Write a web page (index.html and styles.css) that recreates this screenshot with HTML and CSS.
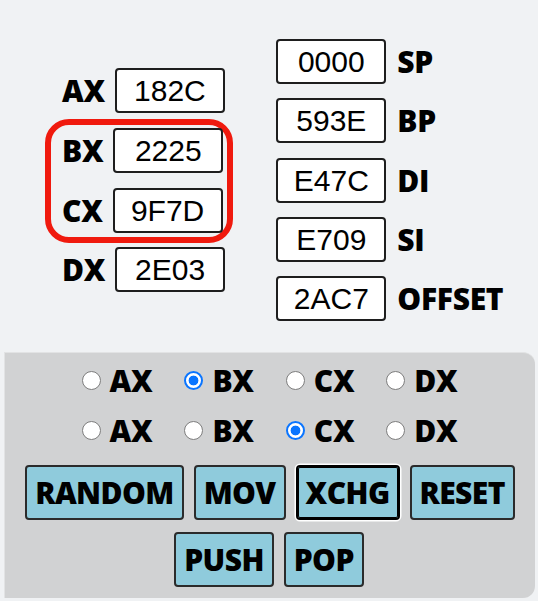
FILE: index.html
```html
<!DOCTYPE html>
<html lang="en">
<head>
<meta charset="utf-8">
<title>Registers</title>
<link rel="stylesheet" href="styles.css">
</head>
<body>
<div class="regs">
  <div class="col-left">
    <div class="row row-out"><span class="lbl">AX</span><div class="val">182C</div></div>
    <div class="hl">
      <div class="row"><span class="lbl">BX</span><div class="val">2225</div></div>
      <div class="row"><span class="lbl">CX</span><div class="val">9F7D</div></div>
    </div>
    <div class="row row-out row-dx"><span class="lbl">DX</span><div class="val">2E03</div></div>
  </div>
  <div class="col-right">
    <div class="row"><div class="val">0000</div><span class="lbl">SP</span></div>
    <div class="row"><div class="val">593E</div><span class="lbl">BP</span></div>
    <div class="row"><div class="val">E47C</div><span class="lbl">DI</span></div>
    <div class="row"><div class="val">E709</div><span class="lbl">SI</span></div>
    <div class="row"><div class="val">2AC7</div><span class="lbl">OFFSET</span></div>
  </div>
</div>
<div class="panel">
  <div class="radios">
    <label class="opt"><input type="radio" name="src"><span>AX</span></label>
    <label class="opt"><input type="radio" name="src" checked><span>BX</span></label>
    <label class="opt"><input type="radio" name="src"><span>CX</span></label>
    <label class="opt"><input type="radio" name="src"><span>DX</span></label>
  </div>
  <div class="radios radios-2">
    <label class="opt"><input type="radio" name="dst"><span>AX</span></label>
    <label class="opt"><input type="radio" name="dst"><span>BX</span></label>
    <label class="opt"><input type="radio" name="dst" checked><span>CX</span></label>
    <label class="opt"><input type="radio" name="dst"><span>DX</span></label>
  </div>
  <div class="btns">
    <button class="btn">RANDOM</button>
    <button class="btn">MOV</button>
    <button class="btn btn-focus">XCHG</button>
    <button class="btn">RESET</button>
  </div>
  <div class="btns btns-2">
    <button class="btn">PUSH</button>
    <button class="btn">POP</button>
  </div>
</div>
</body>
</html>
```

FILE: styles.css
```css
* { box-sizing: border-box; }

html, body {
  margin: 0;
  padding: 0;
}

body {
  width: 538px;
  height: 601px;
  background: #f0f2f4;
  font-family: "Open Sans", "Liberation Sans", sans-serif;
  color: #000;
  overflow: hidden;
}

.regs {
  display: flex;
  align-items: center;
  gap: 43px;
  padding: 39px 0 31px 45px;
}

.row {
  display: flex;
  align-items: center;
  gap: 10px;
  height: 45px;
}

.lbl {
  font-family: "Open Sans", sans-serif;
  font-weight: 800;
  font-size: 30px;
  line-height: 41px;
  letter-spacing: -0.3px;
}

.val {
  width: 110px;
  height: 45px;
  border: 2px solid #1e1e1e;
  border-radius: 4px;
  background: #fff;
  font-family: "Liberation Sans", Arial, sans-serif;
  font-size: 30px;
  line-height: 41px;
  text-align: center;
}

.col-left {
  display: flex;
  flex-direction: column;
}

.row-out {
  padding-left: 17px;
}

.hl {
  display: flex;
  flex-direction: column;
  gap: 15px;
  margin: 6px 0 4px;
  padding: 3px 4px 4px 11px;
  border: 6px solid #f01a0e;
  border-radius: 24px;
}

.col-right {
  display: flex;
  flex-direction: column;
  gap: 14.25px;
}

.col-right .row {
  gap: 11px;
}

.panel {
  margin-left: 4px;
  width: 531px;
  height: 246px;
  background: #d1d2d3;
  border-top: 1px solid #e2e3e4;
  border-left: 1px solid #e2e3e4;
  border-radius: 0 12px 12px 0;
  padding: 7px 0 0;
}

.radios {
  display: flex;
  justify-content: center;
  gap: 32px;
  height: 41px;
  padding-right: 1px;
}

.radios-2 {
  margin-top: 9px;
}

.opt {
  display: flex;
  align-items: center;
  gap: 9px;
  font-weight: 800;
  font-size: 30px;
  line-height: 41px;
  letter-spacing: -0.3px;
}

.opt input {
  appearance: none;
  -webkit-appearance: none;
  margin: 0;
  width: 19px;
  height: 19px;
  border-radius: 50%;
  border: 1.5px solid #7d7d7d;
  background: #fff;
}

.opt input:checked {
  border: 2px solid #0a75ff;
  background: radial-gradient(circle, #0a75ff 0 4.6px, #fff 5.2px);
}

.btns {
  display: flex;
  justify-content: center;
  gap: 10px;
  margin-top: 14px;
}

.btns-2 {
  margin-top: 12px;
  padding-right: 2px;
}

.btn {
  height: 55px;
  padding: 0 8px;
  border: 2px solid #2b2b2b;
  border-radius: 4px;
  background: #8fcbdc;
  font-family: "Open Sans", sans-serif;
  font-weight: 800;
  font-size: 30px;
  line-height: 41px;
  letter-spacing: -0.6px;
  color: #000;
}

.btn-focus {
  border-color: #000;
  box-shadow: inset 0 0 0 1px #000, 0 0 0 1.5px #fff;
}
```
